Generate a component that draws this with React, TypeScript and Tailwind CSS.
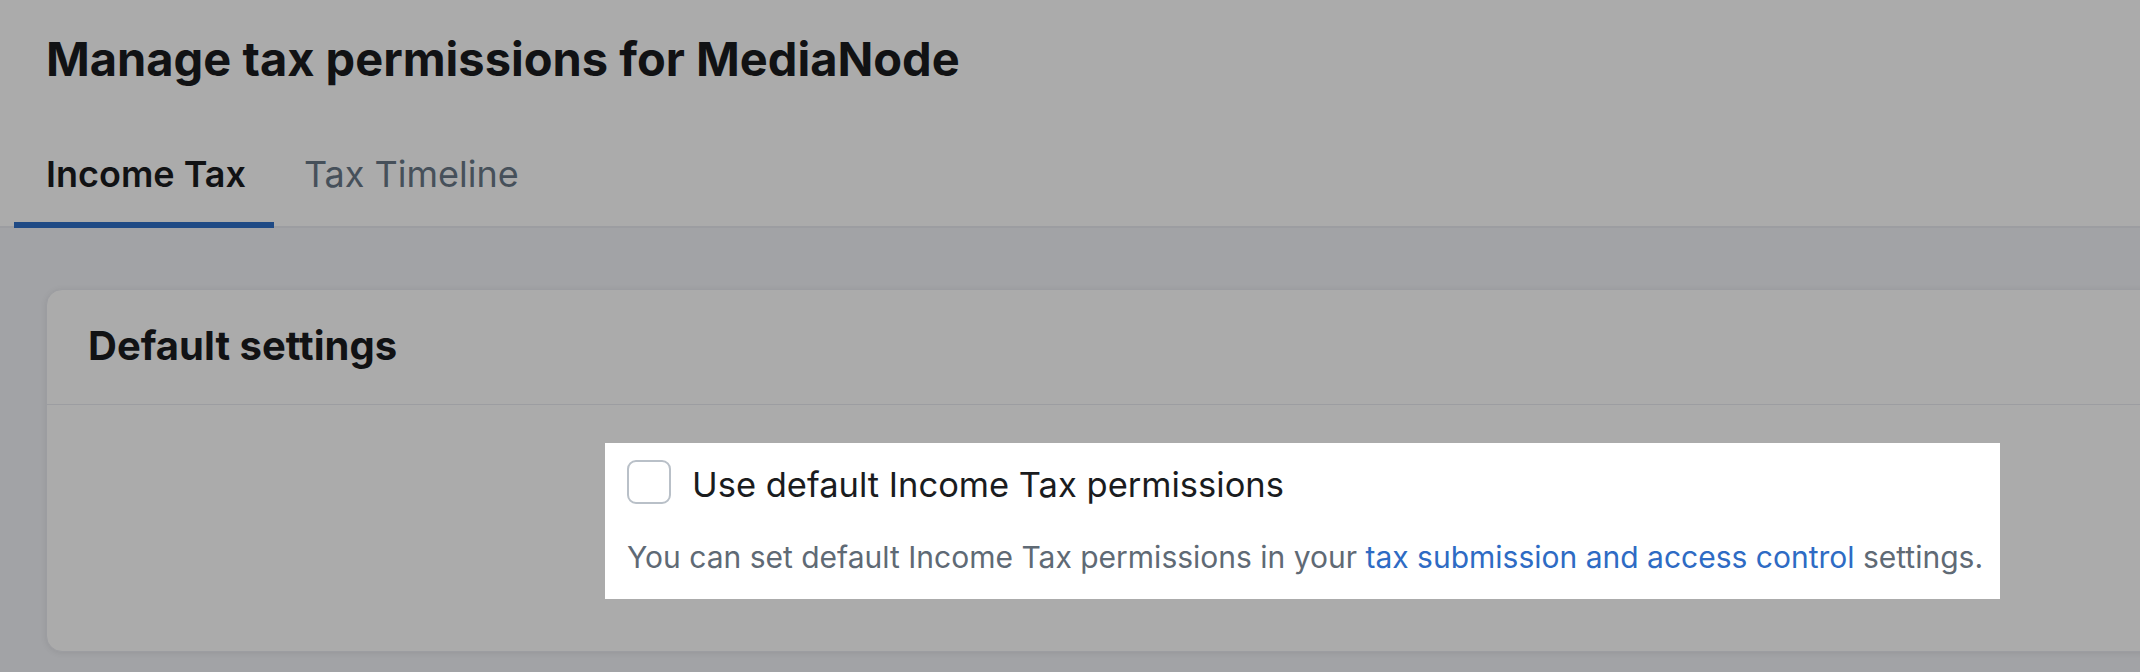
import React from "react";

const font = { fontFamily: "Inter, 'Noto Sans', sans-serif" };

export default function App() {
  return (
    <div className="w-[2140px] h-[672px] overflow-hidden bg-[#a2a3a6]" style={font}>
      {/* page header */}
      <div className="bg-[#ababab] border-b-2 border-[#9c9da1]">
        <h1 className="pl-[46px] pt-[29px] text-[47px] leading-[60px] font-bold text-[#111214]">
          Manage tax permissions for MediaNode
        </h1>
        <div className="flex pl-[14px] mt-[61px]">
          <button className="pl-[32px] pr-[28px] pb-[24px] text-[36px] leading-[48px] font-semibold text-[#111214] border-b-[6px] border-[#1f4a85] -mb-[2px]">
            Income Tax
          </button>
          <button className="px-[30px] pb-[24px] text-[36px] leading-[48px] font-normal text-[#46505a] border-b-[6px] border-transparent -mb-[2px]">
            Tax Timeline
          </button>
        </div>
      </div>

      {/* content */}
      <div className="pl-[46px] pt-[61px]">
        <div className="w-[2200px] rounded-2xl border border-[#9c9da1] bg-[#ababab] shadow-[0_1px_6px_rgba(0,0,0,0.08)]">
          <div className="pl-[41px] pt-[32px] pb-[34px] border-b border-[#9c9da1]">
            <h2 className="text-[40px] leading-[48px] font-bold text-[#111214]">Default settings</h2>
          </div>
          <div className="pl-[558px] pt-[38px] pb-[52px]">
            <div className="w-[1395px] bg-white pl-[22px] pt-[17px] pb-[24px]">
              <label className="flex items-start gap-[21px]">
                <span className="w-[44px] h-[44px] rounded-[9px] border-2 border-[#b9c0c8] bg-white shrink-0" />
                <span className="pt-[3px] text-[34.5px] leading-[44px] text-[#1a1c1e]">
                  Use default Income Tax permissions
                </span>
              </label>
              <p className="mt-[32px] text-[30px] leading-[36px] text-[#5f6a75]">
                You can set default Income Tax permissions in your{" "}
                <a className="text-[#2e6bc4]">tax submission and access control</a> settings.
              </p>
            </div>
          </div>
        </div>
      </div>
    </div>
  );
}
